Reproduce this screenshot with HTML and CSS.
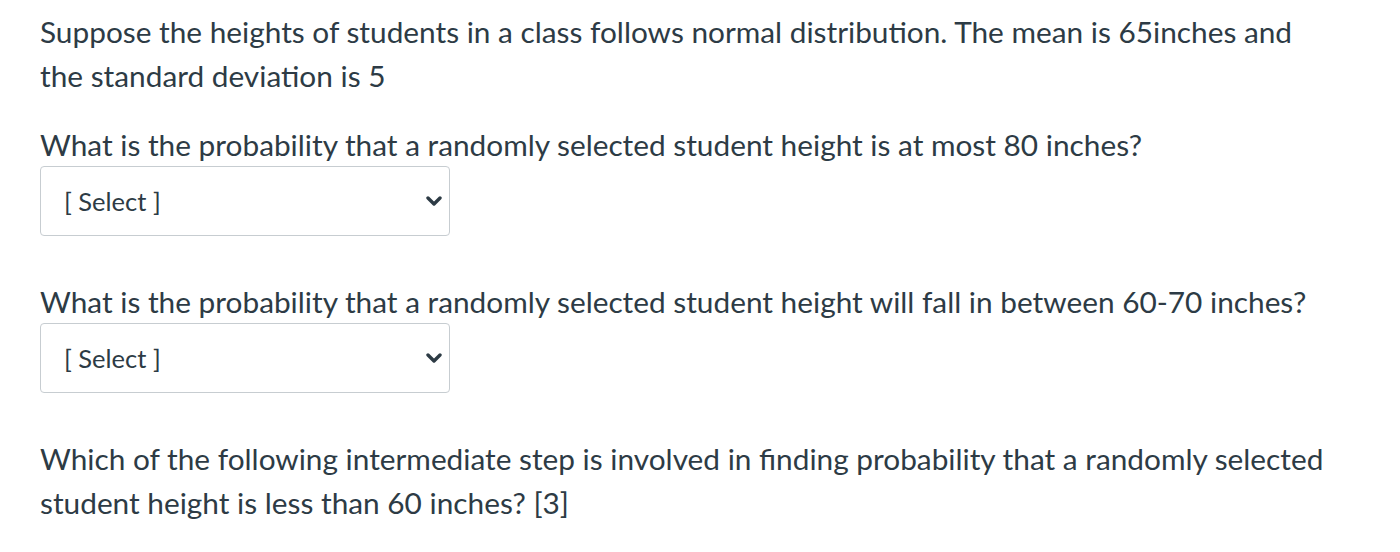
FILE: index.html
```html
<!DOCTYPE html>
<html>
<head>
<meta charset="utf-8">
<link rel="stylesheet" href="styles.css">
</head>
<body>
<div class="quiz">
  <p class="q q-first">Suppose the heights of students in a class follows normal distribution. The mean is 65inches and the standard deviation is 5</p>
  <p class="q">What is the probability that a randomly selected student height is at most 80 inches?</p>
  <div class="select">
    <span class="select-label">[ Select ]</span>
    <svg class="chev" width="16" height="11" viewBox="0 0 16 11"><polyline points="2,2 8,8 14,2" fill="none" stroke="#2d3b45" stroke-width="3.4" stroke-linecap="round" stroke-linejoin="round"/></svg>
  </div>
  <p class="q q-gap">What is the probability that a randomly selected student height will fall in between 60-70 inches?</p>
  <div class="select">
    <span class="select-label">[ Select ]</span>
    <svg class="chev" width="16" height="11" viewBox="0 0 16 11"><polyline points="2,2 8,8 14,2" fill="none" stroke="#2d3b45" stroke-width="3.4" stroke-linecap="round" stroke-linejoin="round"/></svg>
  </div>
  <p class="q q-gap">Which of the following intermediate step is involved in finding probability that a randomly selected student height is less than 60 inches? [3]</p>
</div>
</body>
</html>
```
FILE: styles.css
```css
html, body {
  margin: 0;
  padding: 0;
  background: #ffffff;
}
body {
  font-family: Lato, "Liberation Sans", sans-serif;
  color: #2d3b45;
}
.quiz {
  padding: 10px 40px 0 40px;
  width: 1300px;
}
.q {
  margin: 0;
  font-size: 29.8px;
  line-height: 44px;
}
.q + .q, .q-first + .q {
  margin-top: 25px;
}
.q-gap {
  margin-top: 44px;
}
.select {
  box-sizing: border-box;
  width: 410px;
  height: 70px;
  margin-top: -1px;
  border: 1px solid #c7cdd1;
  border-radius: 4px;
  display: flex;
  align-items: center;
  justify-content: space-between;
  padding: 0 7px 0 23px;
}
.select-label {
  font-size: 25.5px;
  color: #2d3b45;
}
.chev {
  display: block;
}
```
